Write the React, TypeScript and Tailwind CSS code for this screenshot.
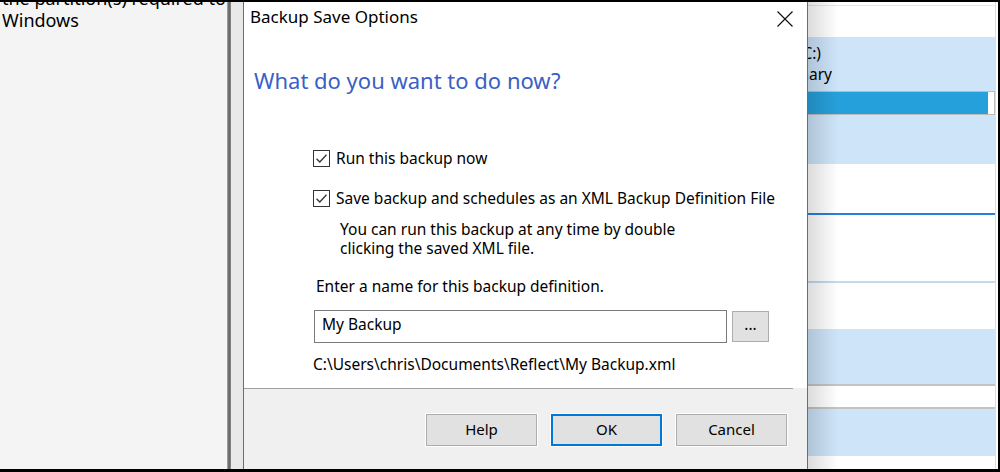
import React from "react";

function CheckBox() {
  return (
    <div className="w-[17px] h-[17px] shrink-0 border border-[#333333] bg-white flex items-center justify-center">
      <svg width="13" height="13" viewBox="0 0 13 13">
        <path d="M1.5 6.8 L4.8 10 L11.5 2.8" fill="none" stroke="#333333" strokeWidth="1.3" />
      </svg>
    </div>
  );
}

function Btn({ label, primary }: { label: string; primary?: boolean }) {
  return (
    <div
      className={
        primary
          ? "w-[111px] h-[32px] flex items-center justify-center bg-[#e1e1e1] border-2 border-[#0078d7] ring-1 ring-white text-[15px] text-black pb-[1px]"
          : "w-[111px] h-[32px] flex items-center justify-center bg-[#e1e1e1] border border-[#adadad] ring-1 ring-white text-[15px] text-black pb-[1px]"
      }
    >
      {label}
    </div>
  );
}

export default function App() {
  return (
    <div className="w-[1000px] h-[472px] overflow-hidden box-border border-t-2 border-r-2 border-b-[3px] border-black bg-white font-['Noto_Sans',sans-serif]">
      <div className="flex h-full">
        {/* left panel */}
        <div className="w-[227px] shrink-0 bg-[#f4f4f4] overflow-hidden">
          <div className="-mt-[15px] pl-[2px] text-[18px] leading-[22px] text-black whitespace-nowrap">
            <div>the partition(s) required to</div>
            <div>Windows</div>
          </div>
        </div>
        {/* splitter */}
        <div className="w-[4px] shrink-0 bg-linear-to-r from-[#b0b0b0] via-[#5e5e5e] to-[#8c8c8c]" />
        <div className="w-[12px] shrink-0 bg-[#e8e8e8]" />

        {/* dialog */}
        <div className="w-[565px] shrink-0 border-x border-[#1883d7] bg-white flex flex-col">
          <div className="h-[34px] shrink-0 flex items-center pl-[6px] pr-[14px]">
            <span className="self-start mt-[4px] text-[17px] leading-[22px] text-black">Backup Save Options</span>
            <svg className="ml-auto" width="16" height="16" viewBox="0 0 16 16">
              <path d="M0.5 0.5 L15.5 15.5 M15.5 0.5 L0.5 15.5" stroke="#111111" strokeWidth="1.2" fill="none" />
            </svg>
          </div>
          <div className="flex-1 flex flex-col text-[15.5px] text-black">
            <div className="mt-[30px] pl-[10px] text-[22px] leading-[28px] text-[#3a5fc6]">
              What do you want to do now?
            </div>
            <div className="mt-[54px] pl-[69px] flex items-center gap-[6px] h-[20px] leading-[20px]">
              <CheckBox />
              <span>Run this backup now</span>
            </div>
            <div className="mt-[20px] pl-[69px] flex items-center gap-[6px] h-[20px] leading-[20px]">
              <CheckBox />
              <span>Save backup and schedules as an XML Backup Definition File</span>
            </div>
            <div className="mt-[12px] pl-[96px] leading-[19px]">
              <div>You can run this backup at any time by double</div>
              <div>clicking the saved XML file.</div>
            </div>
            <div className="mt-[18px] pl-[72px] leading-[20px]">
              Enter a name for this backup definition.
            </div>
            <div className="mt-[14px] pl-[70px] flex items-center gap-[5px]">
              <div className="w-[413px] h-[33px] border border-[#7a7a7a] bg-white flex items-center pl-[7px] pb-[3px]">
                My Backup
              </div>
              <div className="w-[37px] h-[31px] border border-[#adadad] bg-[#e1e1e1] flex items-center justify-center pb-[4px]">
                ...
              </div>
            </div>
            <div className="mt-[11px] pl-[69px] leading-[20px]">
              C:\Users\chris\Documents\Reflect\My Backup.xml
            </div>
          </div>
          <div className="h-[81px] shrink-0 bg-[#f0f0f0] flex flex-col">
            <div className="h-px bg-[#a0a0a0] mr-[14px]" />
            <div className="mt-[25px] flex justify-end gap-[14px] pr-[20px]">
              <Btn label="Help" />
              <Btn label="OK" primary />
              <Btn label="Cancel" />
            </div>
          </div>
        </div>

        {/* right panel */}
        <div className="flex-1 flex relative overflow-hidden">
          <div className="flex-1 flex flex-col text-[15.5px] leading-[21px] text-black">
            <div className="h-[35px] shrink-0">
              <div className="mt-[3px] h-px bg-[#e6e6e6]" />
            </div>
            <div className="h-[127px] shrink-0 bg-[#cde4f9] pt-[6px]">
              <div className="w-[13px] overflow-hidden flex justify-end whitespace-nowrap">
                <span className="shrink-0">Local Disk (C:)</span>
              </div>
              <div className="w-[24px] overflow-hidden flex justify-end whitespace-nowrap">
                <span className="shrink-0">Primary</span>
              </div>
              <div className="mt-[6px] h-[24px] border border-l-0 border-[#bcbcbc] bg-white flex">
                <div className="flex-1 bg-[#26a0da]" />
                <div className="w-[6px]" />
              </div>
            </div>
            <div className="h-[49px] shrink-0 bg-white" />
            <div className="h-[2px] shrink-0 bg-[#2b7fd4]" />
            <div className="h-[66px] shrink-0 bg-white" />
            <div className="h-[2px] shrink-0 bg-[#c3d9ef]" />
            <div className="h-[46px] shrink-0 bg-white" />
            <div className="h-[55px] shrink-0 bg-[#cde4f9]" />
            <div className="h-[2px] shrink-0 bg-[#c3c3c3]" />
            <div className="h-[21px] shrink-0 bg-white" />
            <div className="h-[2px] shrink-0 bg-[#c3c3c3]" />
            <div className="h-[47px] shrink-0 bg-[#cde4f9]" />
            <div className="flex-1 bg-white" />
          </div>
          <div className="w-px bg-[#dedede]" />
          <div className="w-[2px] bg-white" />
          <div className="absolute left-0 top-0 bottom-0 w-[30px] bg-linear-to-r from-[rgba(0,0,0,0.14)] to-transparent" />
        </div>
      </div>
    </div>
  );
}
